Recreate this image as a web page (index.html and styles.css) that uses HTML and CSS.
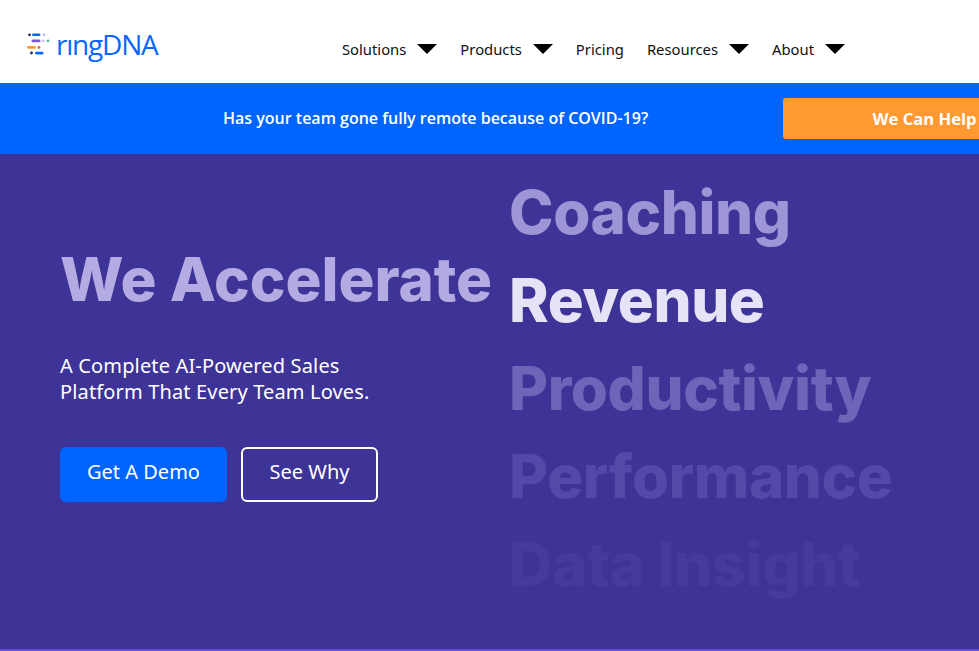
FILE: index.html
```html
<!DOCTYPE html>
<html lang="en">
<head>
  <meta charset="UTF-8">
  <meta name="viewport" content="width=device-width, initial-scale=1.0">
  <title>ringDNA</title>
  <link rel="stylesheet" href="styles.css">
</head>
<body>
  <header class="header">
    <a class="logo" href="#">
      <svg class="logo-mark" width="23" height="23" viewBox="0 0 23 23">
        <circle cx="2.5" cy="1.8" r="1.4" fill="#1b2a5c"/>
        <rect x="5" y="0.5" width="8.5" height="2.6" rx="1.3" fill="#0a66ff"/>
        <circle cx="17" cy="1.8" r="1.4" fill="#a9c4f5"/>
        <rect x="4.5" y="6.5" width="9" height="2.8" rx="1.4" fill="#7a55e0"/>
        <circle cx="16" cy="7.9" r="1.4" fill="#c8b8f0"/>
        <circle cx="21" cy="7.9" r="1.4" fill="#4cc2a0"/>
        <rect x="0" y="13" width="9" height="2.8" rx="1.4" fill="#ff9a33"/>
        <circle cx="12" cy="14.4" r="1.4" fill="#ee5a5a"/>
        <circle cx="4.5" cy="20" r="1.4" fill="#1b2a5c"/>
        <rect x="8" y="18.8" width="8.5" height="2.6" rx="1.3" fill="#0a66ff"/>
      </svg>
      <span class="logo-text">rıngDNA</span>
    </a>
    <nav class="nav">
      <a href="#">Solutions <span class="caret"></span></a>
      <a href="#">Products <span class="caret"></span></a>
      <a href="#">Pricing</a>
      <a href="#">Resources <span class="caret"></span></a>
      <a href="#">About <span class="caret"></span></a>
    </nav>
  </header>

  <div class="banner">
    <p class="banner-text">Has your team gone fully remote because of COVID-19?</p>
    <a class="banner-btn" href="#">We Can Help</a>
  </div>

  <section class="hero">
    <div class="hero-left">
      <h1 class="hero-title">We Accelerate</h1>
      <p class="hero-sub">A Complete AI-Powered Sales<br>Platform That Every Team Loves.</p>
      <div class="hero-actions">
        <a class="btn btn-solid" href="#">Get A Demo</a>
        <a class="btn btn-outline" href="#">See Why</a>
      </div>
    </div>
    <ul class="words">
      <li class="word w1">Coaching</li>
      <li class="word w2">Revenue</li>
      <li class="word w3">Productivity</li>
      <li class="word w4">Performance</li>
      <li class="word w5">Data Insight</li>
    </ul>
  </section>
  <div class="next-section"></div>
</body>
</html>
```

FILE: styles.css
```css
html, body {
  margin: 0;
  height: 651px;
  overflow: hidden;
}
body {
  font-family: "Noto Sans", "Open Sans", sans-serif;
  background-color: #3e3397;
}
a {
  text-decoration: none;
}

.header {
  height: 83px;
  background-color: #fff;
  display: flex;
  padding-left: 27px;
  padding-right: 134px;
}
.logo {
  display: flex;
  align-items: center;
  gap: 6px;
  height: 83px;
  margin-top: 3px;
}
.logo-text {
  font-family: "Open Sans", sans-serif;
  font-size: 28px;
  font-weight: 500;
  letter-spacing: -1.2px;
  color: #0a66ff;
  margin-top: -1px;
}
.nav {
  display: flex;
  align-items: center;
  gap: 23px;
  margin-left: auto;
  padding-top: 15px;
}
.nav a {
  color: #111;
  font-size: 14.8px;
  display: flex;
  align-items: center;
  gap: 11px;
}
.caret {
  width: 0;
  height: 0;
  border-left: 10.5px solid transparent;
  border-right: 10.5px solid transparent;
  border-top: 10px solid #000;
}

.banner {
  height: 71px;
  background-color: #0065ff;
  display: flex;
  align-items: center;
  padding-left: 223px;
}
.banner-text {
  margin: -1px 0 0;
  color: #fff;
  font-family: "Open Sans", sans-serif;
  font-weight: 600;
  font-size: 16px;
  width: 560px;
  flex-shrink: 0;
}
.banner-btn {
  flex-shrink: 0;
  width: 283px;
  height: 41px;
  line-height: 41px;
  text-align: center;
  background-color: #ff9a33;
  border-radius: 3px;
  color: #fff;
  font-family: "Open Sans", sans-serif;
  font-weight: 700;
  font-size: 16.6px;
}

.hero {
  height: 495px;
  display: flex;
  padding-left: 60px;
  background-color: #3e3397;
}
.hero-left {
  width: 449px;
  flex-shrink: 0;
  padding-top: 86px;
}
.hero-title {
  margin: 0;
  font-family: "Inter", sans-serif;
  font-weight: 800;
  font-size: 60px;
  line-height: 78px;
  color: #b3abe2;
  white-space: nowrap;
}
.hero-sub {
  margin: 35px 0 0;
  color: #fff;
  font-size: 20px;
  line-height: 26px;
  letter-spacing: 0.15px;
}
.hero-actions {
  display: flex;
  gap: 14px;
  margin-top: 42px;
}
.btn {
  height: 55px;
  box-sizing: border-box;
  padding-bottom: 6px;
  border-radius: 6px;
  color: #fff;
  font-size: 20px;
  display: flex;
  align-items: center;
  justify-content: center;
}
.btn-solid {
  width: 167px;
  background-color: #0065ff;
}
.btn-outline {
  width: 137px;
  border: 2px solid #fff;
}

.words {
  list-style: none;
  margin: 0;
  padding: 14px 0 0;
}
.word {
  font-family: "Inter", sans-serif;
  font-weight: 800;
  font-size: 60px;
  line-height: 88px;
  letter-spacing: -0.4px;
  white-space: nowrap;
}
.w1 { color: #9d95d6; }
.w2 { color: #e6e3f6; }
.w3 { color: #6e65b8; }
.w4 { color: #5349a8; }
.w5 { color: #463b9d; }

.next-section {
  height: 2px;
  background-color: #6a4bd8;
}
```
